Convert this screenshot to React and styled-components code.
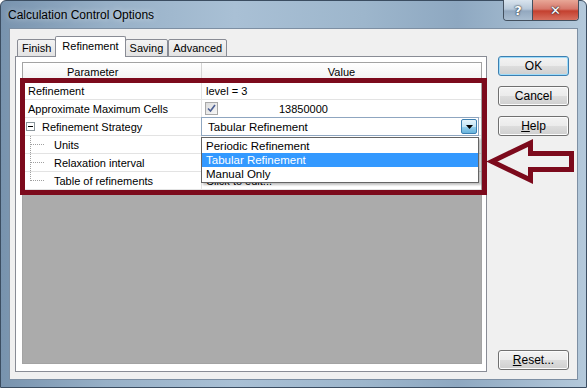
import React from 'react';
import styled, { createGlobalStyle } from 'styled-components';

const GlobalStyle = createGlobalStyle`
  html, body {
    margin: 0;
    padding: 0;
  }
  body {
    width: 587px;
    height: 388px;
    overflow: hidden;
    font-family: "Liberation Sans", Arial, sans-serif;
    font-size: 11px;
    color: #000;
  }
`;

const MAROON = '#7c0a1c';

const Window = styled.div`
  position: relative;
  box-sizing: border-box;
  width: 587px;
  height: 388px;
  display: flex;
  flex-direction: column;
  border: 1px solid #3b4d61;
  border-radius: 6px 6px 0 0;
  background: linear-gradient(to right, #7893ae 0%, #97b0c7 18%, #a9c0d5 40%, #9db6cc 62%, #8ea8c1 78%, #b4c9db 100%);
`;

const TitleBar = styled.div`
  height: 27px;
  display: flex;
  align-items: flex-start;
  padding-left: 7px;
`;

const Title = styled.div`
  flex: 1;
  margin-top: 7px;
  font-size: 12px;
  color: #000;
  text-shadow: 0 0 6px rgba(255, 255, 255, 0.7);
`;

const CaptionButtons = styled.div`
  display: flex;
  margin-top: -1px;
  margin-right: 7px;
  height: 20px;
  border: 1px solid #43505f;
  border-top: none;
  border-radius: 0 0 4px 4px;
  overflow: hidden;
`;

const CaptionButton = styled.div`
  width: ${p => p.$w}px;
  display: flex;
  align-items: center;
  justify-content: center;
  color: #fff;
  font-family: "DejaVu Sans", sans-serif;
  font-weight: bold;
  font-size: 13px;
  text-shadow: 0 0 2px #1c2633, 0 0 1px #1c2633;
  background: ${p =>
    p.$close
      ? 'linear-gradient(#e8a797 0%, #d6776a 45%, #c4402f 55%, #d8705f 100%)'
      : 'linear-gradient(#d9e4ee 0%, #b7c8d9 45%, #93a8bf 55%, #a9bdd0 100%)'};
  & + & {
    border-left: 1px solid #43505f;
  }
`;

const Client = styled.div`
  flex: 1;
  margin: 0 8px 7px 8px;
  display: flex;
  background: #f0f0f0;
  border: 1px solid #7d8fa3;
`;

const TabSection = styled.div`
  display: flex;
  flex-direction: column;
  width: 472px;
  margin: 8px 0 7px 5px;
`;

const TabStrip = styled.div`
  display: flex;
  align-items: flex-end;
  height: 20px;
  padding-left: 2px;
  margin-bottom: -1px;
  position: relative;
  z-index: 1;
`;

const Tab = styled.div`
  box-sizing: border-box;
  height: ${p => (p.$active ? 21 : 18)}px;
  padding: ${p => (p.$active ? '3px 6px 0' : '2px 4px 0')};
  margin: ${p => (p.$active ? '0 -1px' : '0')};
  border: 1px solid #898c95;
  border-bottom: ${p => (p.$active ? 'none' : '1px solid #898c95')};
  border-radius: 2px 2px 0 0;
  background: ${p => (p.$active ? '#fff' : 'linear-gradient(#f3f3f3, #e3e3e3)')};
  font-size: 11px;
  position: relative;
  z-index: ${p => (p.$active ? 2 : 1)};
  & + & {
    border-left: ${p => (p.$active ? '1px solid #898c95' : 'none')};
  }
`;

const Panel = styled.div`
  flex: 1;
  display: flex;
  border: 1px solid #898c95;
  background: #fff;
  padding: 5px 4px 7px 6px;
`;

const Grid = styled.div`
  flex: 1;
  display: flex;
  flex-direction: column;
  border: 1px solid #a3a3a3;
  background: #ababab;
`;

const HeaderRow = styled.div`
  display: grid;
  grid-template-columns: 179px 1fr;
  height: 18px;
  background: linear-gradient(#ffffff, #f1f1f1);
  border-bottom: 1px solid #d5d5d5;
`;

const HeaderCell = styled.div`
  display: flex;
  align-items: center;
  justify-content: ${p => (p.$center ? 'center' : 'flex-start')};
  padding-left: ${p => p.$pad || 0}px;
  border-right: ${p => (p.$sep ? '1px solid #d5d5d5' : 'none')};
`;

const Row = styled.div`
  display: grid;
  grid-template-columns: 179px 1fr;
  height: 17px;
  background: #fff;
  border-bottom: 1px solid #e3e3e3;
`;

const NameCell = styled.div`
  display: flex;
  align-items: center;
  padding-left: ${p => p.$pad}px;
  border-right: 1px solid #e3e3e3;
  white-space: nowrap;
`;

const ValueCell = styled.div`
  position: relative;
  display: flex;
  align-items: center;
  padding-left: 4px;
  white-space: nowrap;
  z-index: ${p => (p.$raised ? 5 : 0)};
`;

const Expander = styled.div`
  box-sizing: border-box;
  width: 9px;
  height: 9px;
  margin-right: 7px;
  border: 1px solid #8c969c;
  background: #fff;
  display: flex;
  align-items: center;
  justify-content: center;
  &::after {
    content: '';
    width: 5px;
    height: 1px;
    background: #000;
  }
`;

const ChildLabel = styled.span`
  margin-left: 10px;
`;

const CheckBox = styled.div`
  box-sizing: border-box;
  width: 13px;
  height: 13px;
  margin-left: -1px;
  border: 1px solid #a8a8a8;
  background: linear-gradient(135deg, #dcdcdc, #f7f7f7);
  display: flex;
  align-items: center;
  justify-content: center;
`;

const Number = styled.span`
  margin-left: 61px;
`;

const Combo = styled.div`
  box-sizing: border-box;
  flex: 1;
  align-self: stretch;
  margin: -1px 2px -1px -5px;
  display: flex;
  border: 1px solid #8fa6c0;
  background: #fff;
`;

const ComboText = styled.div`
  flex: 1;
  display: flex;
  align-items: center;
  padding-left: 6px;
  font-size: 11.5px;
`;

const ComboButton = styled.div`
  width: 14px;
  margin: 1px;
  border: 1px solid #3c7fb1;
  border-radius: 2px;
  background: linear-gradient(#e5f4fc 0%, #c4e5f6 50%, #98d1ef 51%, #68b3db 100%);
  display: flex;
  align-items: center;
  justify-content: center;
`;

const DropList = styled.div`
  position: absolute;
  top: 19px;
  left: -1px;
  width: 278px;
  box-sizing: border-box;
  border: 1px solid #646464;
  background: #fff;
  box-shadow: 2px 2px 2px rgba(0, 0, 0, 0.25);
  padding: 1px 0;
`;

const DropItem = styled.div`
  height: 14px;
  line-height: 14px;
  padding-left: 4px;
  font-size: 11.5px;
  background: ${p => (p.$selected ? '#3399ff' : 'transparent')};
  color: ${p => (p.$selected ? '#fff' : '#000')};
`;

const ButtonColumn = styled.div`
  display: flex;
  flex-direction: column;
  gap: 10px;
  width: 71px;
  margin: 27px 0 9px 11px;
`;

const Spacer = styled.div`
  flex: 1;
`;

const Button = styled.div`
  box-sizing: border-box;
  height: 20px;
  display: flex;
  align-items: center;
  justify-content: center;
  font-size: 12px;
  border: 1px solid ${p => (p.$default ? '#3c7fb1' : '#707070')};
  border-radius: 3px;
  background: linear-gradient(#f3f3f3 0%, #ebebeb 50%, #dddddd 51%, #cfcfcf 100%);
  box-shadow: ${p => (p.$default ? 'inset 0 0 0 1px #9fdcfa' : 'inset 0 0 0 1px #fcfcfc')};
  u {
    text-decoration: underline;
  }
`;

const Highlight = styled.div`
  position: absolute;
  left: 19px;
  top: 77px;
  width: 467px;
  height: 117px;
  box-sizing: border-box;
  border: 5px solid ${MAROON};
  z-index: 10;
  pointer-events: none;
`;

const ArrowSvg = styled.svg`
  position: absolute;
  left: 479px;
  top: 129px;
  z-index: 10;
`;

const TreeGuide = ({ last }) => (
  <svg width="14" height="17" style={{ flex: 'none', alignSelf: 'flex-start' }}>
    <line x1="0.5" y1="0" x2="0.5" y2={last ? 9 : 17} stroke="#a0a0a0" strokeDasharray="1 1" />
    <line x1="1" y1="8.5" x2="14" y2="8.5" stroke="#a0a0a0" strokeDasharray="1 1" />
  </svg>
);

const tabs = ['Finish', 'Refinement', 'Saving', 'Advanced'];
const options = ['Periodic Refinement', 'Tabular Refinement', 'Manual Only'];

export default function App() {
  return (
    <Window>
      <GlobalStyle />
      <TitleBar>
        <Title>Calculation Control Options</Title>
        <CaptionButtons>
          <CaptionButton $w={28}>?</CaptionButton>
          <CaptionButton $w={45} $close>✕</CaptionButton>
        </CaptionButtons>
      </TitleBar>

      <Client>
        <TabSection>
          <TabStrip>
            {tabs.map(t => (
              <Tab key={t} $active={t === 'Refinement'}>{t}</Tab>
            ))}
          </TabStrip>
          <Panel>
            <Grid>
              <HeaderRow>
                <HeaderCell $pad={44} $sep>Parameter</HeaderCell>
                <HeaderCell $center>Value</HeaderCell>
              </HeaderRow>

              <Row>
                <NameCell $pad={5}>Refinement</NameCell>
                <ValueCell>level = 3</ValueCell>
              </Row>

              <Row>
                <NameCell $pad={5}>Approximate Maximum Cells</NameCell>
                <ValueCell>
                  <CheckBox>
                    <svg width="9" height="9" viewBox="0 0 9 9">
                      <path d="M1 4.5 L3.5 7 L8 1" fill="none" stroke="#4c5f93" strokeWidth="1.6" />
                    </svg>
                  </CheckBox>
                  <Number>13850000</Number>
                </ValueCell>
              </Row>

              <Row>
                <NameCell $pad={3}>
                  <Expander />
                  Refinement Strategy
                </NameCell>
                <ValueCell $raised>
                  <Combo>
                    <ComboText>Tabular Refinement</ComboText>
                    <ComboButton>
                      <svg width="7" height="4" viewBox="0 0 7 4">
                        <path d="M0 0 H7 L3.5 4 Z" fill="#000" />
                      </svg>
                    </ComboButton>
                  </Combo>
                  <DropList>
                    {options.map(o => (
                      <DropItem key={o} $selected={o === 'Tabular Refinement'}>{o}</DropItem>
                    ))}
                  </DropList>
                </ValueCell>
              </Row>

              <Row>
                <NameCell $pad={7}>
                  <TreeGuide />
                  <ChildLabel>Units</ChildLabel>
                </NameCell>
                <ValueCell />
              </Row>

              <Row>
                <NameCell $pad={7}>
                  <TreeGuide />
                  <ChildLabel>Relaxation interval</ChildLabel>
                </NameCell>
                <ValueCell />
              </Row>

              <Row>
                <NameCell $pad={7}>
                  <TreeGuide last />
                  <ChildLabel>Table of refinements</ChildLabel>
                </NameCell>
                <ValueCell>Click to edit...</ValueCell>
              </Row>
            </Grid>
          </Panel>
        </TabSection>

        <ButtonColumn>
          <Button $default>OK</Button>
          <Button>Cancel</Button>
          <Button><span><u>H</u>elp</span></Button>
          <Spacer />
          <Button><span><u>R</u>eset...</span></Button>
        </ButtonColumn>
      </Client>

      <Highlight />
      <ArrowSvg width="100" height="60" viewBox="0 0 100 60">
        <polygon
          points="12,31.5 50.5,13 50.5,23.5 91.5,23.5 91.5,39.5 50.5,39.5 50.5,50"
          fill="none"
          stroke={MAROON}
          strokeWidth="5"
          strokeLinejoin="miter"
        />
      </ArrowSvg>
    </Window>
  );
}
